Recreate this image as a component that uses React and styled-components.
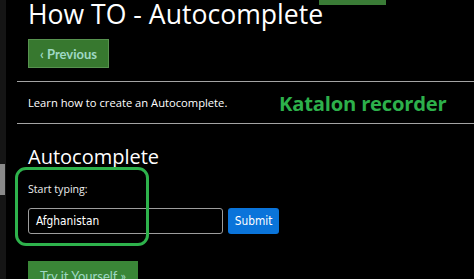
import React from "react";
import styled, { createGlobalStyle } from "styled-components";

const GlobalStyle = createGlobalStyle`
  html, body {
    margin: 0;
    padding: 0;
    background: #000;
    overflow: hidden;
  }
  body {
    font-family: "Open Sans", "Noto Sans", sans-serif;
    color: #fff;
  }
`;

const Shell = styled.div`
  display: flex;
  width: 474px;
  height: 279px;
  overflow: hidden;
  background: #000;
`;

const ScrollStrip = styled.div`
  width: 6px;
  flex: none;
  background: #151515;
  display: flex;
  flex-direction: column;
  padding-top: 164px;
  box-sizing: border-box;
`;

const ScrollThumb = styled.div`
  width: 5px;
  height: 31px;
  flex: none;
  background: #8a8a8a;
`;

const Main = styled.div`
  flex: 1;
  padding-left: 11px;
  display: flex;
  flex-direction: column;
  & > * {
    flex-shrink: 0;
  }
`;

const Inner = styled.div`
  padding-left: 11px;
  display: flex;
  flex-direction: column;
  & > * {
    flex-shrink: 0;
  }
`;

const TopStub = styled.div`
  height: 5px;
  width: 67px;
  margin-left: 291px;
  background: #3a7b36;
`;

const Title = styled.h1`
  margin: -8px 0 0;
  font-family: "Open Sans", "Noto Sans", sans-serif;
  font-weight: 400;
  font-size: 26.6px;
  line-height: 34px;
  color: #fff;
`;

const GreenButton = styled.div`
  display: inline-flex;
  align-items: center;
  align-self: flex-start;
  box-sizing: border-box;
  height: ${(p) => p.$h || 29}px;
  padding: 0 ${(p) => p.$px || 11}px;
  background: ${(p) => p.$bg || "#37782f"};
  border: 1px solid ${(p) => p.$border || "#57924f"};
  color: #9fd8c4;
  font-family: Lato, "Open Sans", sans-serif;
  font-size: ${(p) => p.$fs || 13}px;
  font-weight: ${(p) => p.$fw || 700};
`;

const Rule = styled.div`
  height: 1px;
  background: #a4a4a4;
`;

const IntroRow = styled.div`
  height: 41px;
  display: flex;
  align-items: center;
  padding-left: 11px;
`;

const Intro = styled.span`
  width: 251px;
  font-family: "Open Sans", "Noto Sans", sans-serif;
  font-size: 11.2px;
  color: #fff;
`;

const Katalon = styled.span`
  font-family: "Open Sans", "Noto Sans", sans-serif;
  font-weight: 700;
  font-size: 20.2px;
  color: #2db04b;
  letter-spacing: -0.2px;
`;

const SubTitle = styled.h2`
  margin: 19px 0 0;
  font-family: "Open Sans", "Noto Sans", sans-serif;
  font-weight: 400;
  font-size: 20px;
  line-height: 28px;
  color: #fff;
`;

const Form = styled.div`
  position: relative;
  display: flex;
  flex-direction: column;
  padding-top: 11px;
`;

const Label = styled.div`
  font-family: "Open Sans", "Noto Sans", sans-serif;
  font-size: 10.6px;
  line-height: 14px;
  color: #eee;
`;

const InputRow = styled.div`
  display: flex;
  gap: 5px;
  margin-top: 12px;
`;

const Field = styled.div`
  width: 195px;
  height: 26px;
  box-sizing: border-box;
  border: 1px solid #9d9d9d;
  border-radius: 3px;
  display: flex;
  align-items: center;
  padding-left: 7px;
  font-family: "DejaVu Sans Condensed", "DejaVu Sans", sans-serif;
  font-size: 11.8px;
  color: #fff;
`;

const Submit = styled.div`
  width: 51px;
  height: 26px;
  border-radius: 3px;
  background: #0a74da;
  display: flex;
  align-items: center;
  justify-content: center;
  font-family: "DejaVu Sans Condensed", "DejaVu Sans", sans-serif;
  font-size: 11.8px;
  color: #fff;
`;

const Highlight = styled.div`
  position: absolute;
  left: -13px;
  top: -4px;
  width: 134px;
  height: 79px;
  box-sizing: border-box;
  border: 3px solid #2eb24c;
  border-radius: 11px;
  pointer-events: none;
`;

export default function App() {
  return (
    <>
      <GlobalStyle />
      <Shell>
        <ScrollStrip>
          <ScrollThumb />
        </ScrollStrip>
        <Main>
          <Inner>
            <TopStub />
            <Title>How TO - Autocomplete</Title>
            <GreenButton style={{ marginTop: 8 }} $fs={13} $fw={700}>
              ‹ Previous
            </GreenButton>
          </Inner>
          <Rule style={{ marginTop: 13 }} />
          <IntroRow>
            <Intro>Learn how to create an Autocomplete.</Intro>
            <Katalon>Katalon recorder</Katalon>
          </IntroRow>
          <Rule />
          <Inner>
            <SubTitle>Autocomplete</SubTitle>
            <Form>
              <Label>Start typing:</Label>
              <InputRow>
                <Field>Afghanistan</Field>
                <Submit>Submit</Submit>
              </InputRow>
              <Highlight />
            </Form>
            <GreenButton
              style={{ marginTop: 27 }}
              $h={30}
              $px={11}
              $fs={13}
              $fw={400}
              $bg="#3a8637"
              $border="#3a8637"
            >
              Try it Yourself »
            </GreenButton>
          </Inner>
        </Main>
      </Shell>
    </>
  );
}
